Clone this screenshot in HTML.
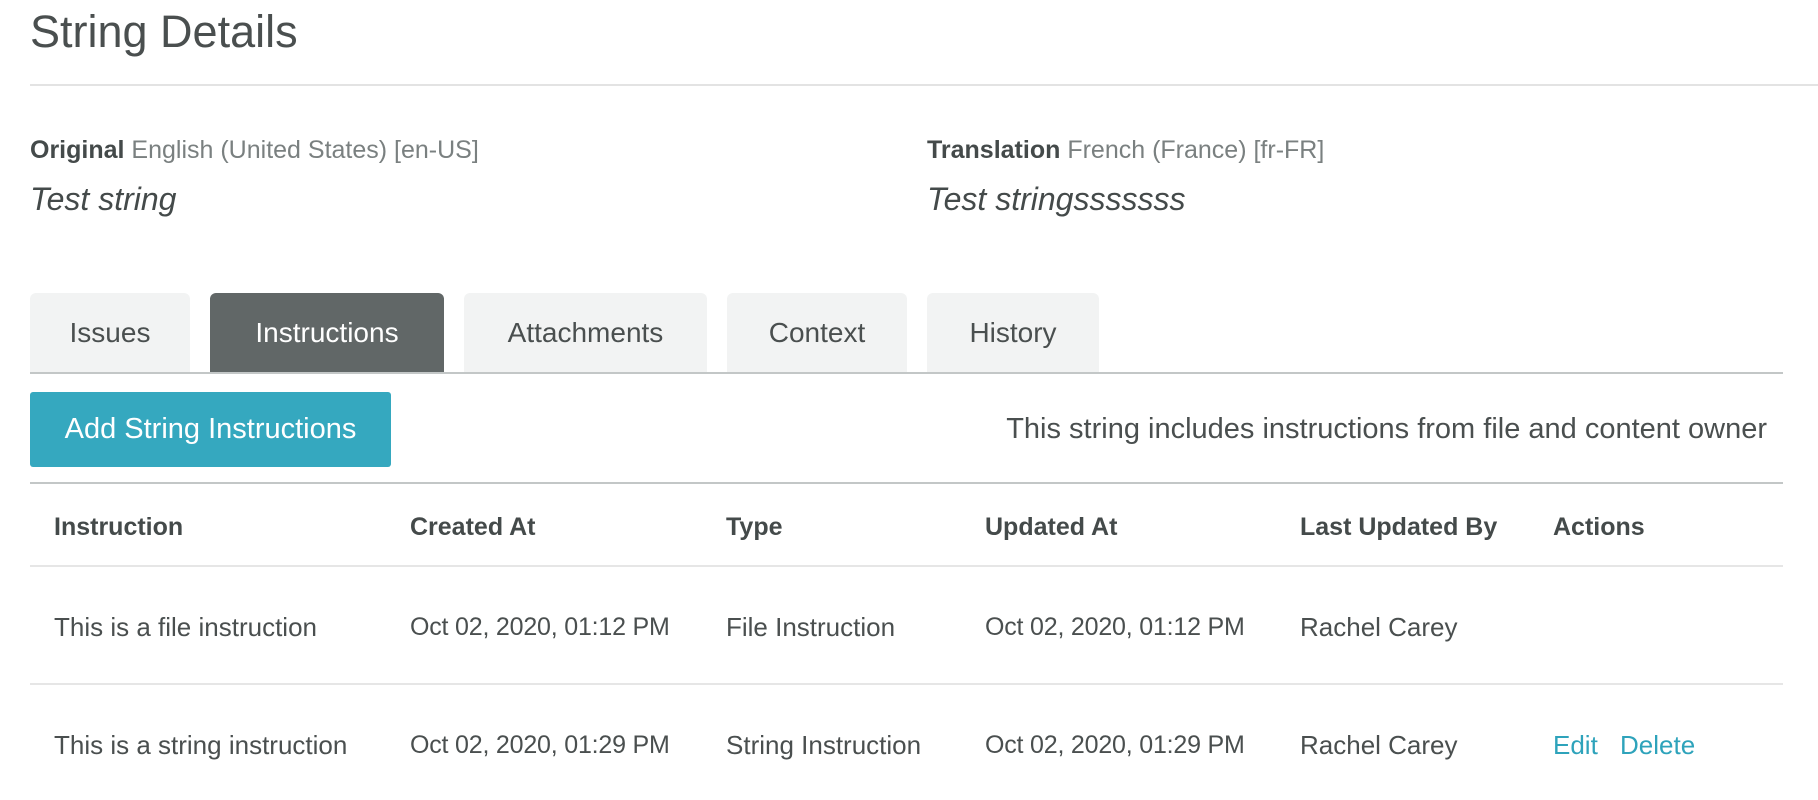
<!DOCTYPE html>
<html><head><meta charset="utf-8"><style>
*{margin:0;padding:0;box-sizing:border-box}
body{width:1818px;height:800px;background:#fff;font-family:"Liberation Sans",Arial,sans-serif;color:#4a4f4f;position:relative;overflow:hidden}
.a{position:absolute;white-space:nowrap}
h1{position:absolute;left:30px;top:6px;font-size:45px;font-weight:normal;color:#4a4f4f;white-space:nowrap}
.hr{position:absolute;left:30px;right:0;top:84px;height:2px;background:#e3e3e3}
.lbl{font-size:25px;color:#7a8080}
.lbl b{color:#444a4a}
.it{font-size:32px;font-style:italic;color:#444a4a}
.tab{position:absolute;top:293px;height:80px;background:#f2f3f3;border-radius:6px 6px 0 0;font-size:28px;color:#4a4f4f;display:flex;align-items:center;justify-content:center}
.tab.on{background:#616767;color:#fff}
.line{position:absolute;left:30px;width:1753px;height:2px;background:#c3c7c7}
.btn{position:absolute;left:30px;top:392px;width:361px;height:75px;background:#35a8bf;border-radius:3px;color:#fff;font-size:29px;display:flex;align-items:center;justify-content:center}
.th{font-size:25px;font-weight:bold;color:#444a4a}
.td{font-size:26px;color:#4a4f4f}
.dt{font-size:25px;letter-spacing:-0.2px}
.rl{position:absolute;left:30px;width:1753px;height:2px;background:#e6e6e6}
.lk{color:#2ea3bb}
</style></head><body>
<h1>String Details</h1>
<div class="hr"></div>
<div class="a lbl" style="left:30px;top:136px"><b>Original</b> English (United States) [en-US]</div>
<div class="a it" style="left:30px;top:181px">Test string</div>
<div class="a lbl" style="left:927px;top:136px"><b>Translation</b> French (France) [fr-FR]</div>
<div class="a it" style="left:927px;top:181px">Test stringsssssss</div>

<div class="tab" style="left:30px;width:160px">Issues</div>
<div class="tab on" style="left:210px;width:234px">Instructions</div>
<div class="tab" style="left:464px;width:243px">Attachments</div>
<div class="tab" style="left:727px;width:180px">Context</div>
<div class="tab" style="left:927px;width:172px">History</div>
<div class="line" style="top:372px"></div>

<div class="btn">Add String Instructions</div>
<div class="a" style="right:51px;top:413px;font-size:29px;color:#4a4f4f">This string includes instructions from file and content owner</div>
<div class="line" style="top:482px"></div>

<div class="a th" style="left:54px;top:513px">Instruction</div>
<div class="a th" style="left:410px;top:513px">Created At</div>
<div class="a th" style="left:726px;top:513px">Type</div>
<div class="a th" style="left:985px;top:513px">Updated At</div>
<div class="a th" style="left:1300px;top:513px">Last Updated By</div>
<div class="a th" style="left:1553px;top:513px">Actions</div>
<div class="rl" style="top:565px"></div>

<div class="a td" style="left:54px;top:612px">This is a file instruction</div>
<div class="a td dt" style="left:410px;top:613px">Oct 02, 2020, 01:12 PM</div>
<div class="a td" style="left:726px;top:612px">File Instruction</div>
<div class="a td dt" style="left:985px;top:613px">Oct 02, 2020, 01:12 PM</div>
<div class="a td" style="left:1300px;top:612px">Rachel Carey</div>
<div class="rl" style="top:683px"></div>

<div class="a td" style="left:54px;top:730px">This is a string instruction</div>
<div class="a td dt" style="left:410px;top:731px">Oct 02, 2020, 01:29 PM</div>
<div class="a td" style="left:726px;top:730px">String Instruction</div>
<div class="a td dt" style="left:985px;top:731px">Oct 02, 2020, 01:29 PM</div>
<div class="a td" style="left:1300px;top:730px">Rachel Carey</div>
<div class="a td lk" style="left:1553px;top:730px">Edit</div>
<div class="a td lk" style="left:1620px;top:730px">Delete</div>
</body></html>
